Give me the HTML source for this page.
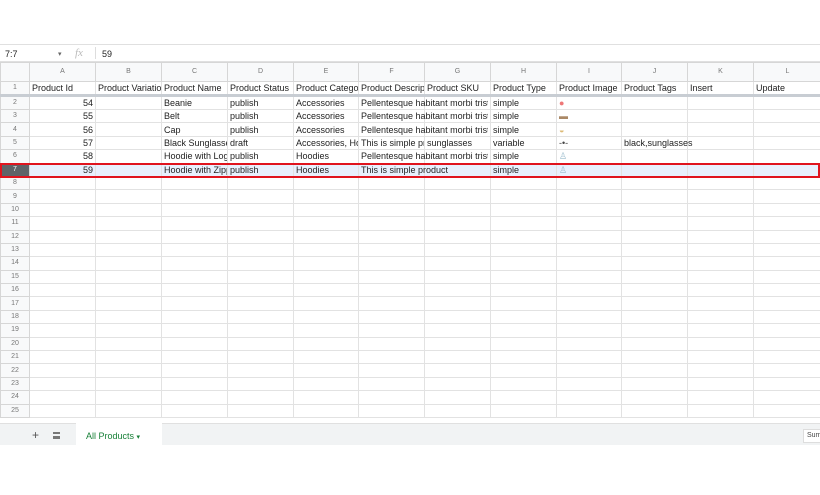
<!DOCTYPE html>
<html><head><style>
*{margin:0;padding:0;box-sizing:border-box}
body{width:820px;height:495px;background:#fff;font-family:"Liberation Sans",Arial,sans-serif;position:relative;overflow:hidden;font-size:9px;color:#222}
.a{position:absolute}
table{position:absolute;left:0;top:62px;width:821px;border-collapse:collapse;table-layout:fixed}
td{border:1px solid #e2e2e2;height:13.4px;white-space:nowrap;overflow:hidden;padding:0 2px;font-size:9px;line-height:12px}
td.rh{background:#f8f9fa;color:#777;text-align:center;font-size:7px;border-color:#d6d6d6}
tr.ch td{background:#f8f9fa;color:#777;text-align:center;font-size:7px;height:19px;border-color:#d6d6d6}
tr.r1 td{height:14px;border-bottom:3px solid #c8cdd3}
.n{text-align:right}
tr.sel td{background:#e8f0fd}
tr.sel td.rh{background:#5f6368;color:#fff}
td.ov{overflow:visible}
.sp{display:inline-block;width:127px;overflow:hidden;vertical-align:top;position:relative;z-index:1}
</style></head><body>
<div class="a" style="left:0;top:44px;width:820px;height:18px;border-top:1px solid #e0e0e0;border-bottom:1px solid #e0e0e0"></div>
<div class="a" style="left:5px;top:49px;font-size:9px">7:7</div>
<div class="a" style="left:58px;top:50px;font-size:7px;color:#666">▾</div>
<div class="a" style="left:75px;top:47px;font-size:11px;color:#bbb;font-style:italic;font-family:'Liberation Serif',serif">fx</div>
<div class="a" style="left:95px;top:47px;width:1px;height:12px;background:#ddd"></div>
<div class="a" style="left:102px;top:49px;font-size:9px">59</div>
<table>
<colgroup><col style="width:29px"><col style="width:66px"><col style="width:66px"><col style="width:66px"><col style="width:66px"><col style="width:65px"><col style="width:66px"><col style="width:66px"><col style="width:66px"><col style="width:65px"><col style="width:66px"><col style="width:66px"><col style="width:68px"></colgroup>
<tr class="ch"><td></td><td>A</td><td>B</td><td>C</td><td>D</td><td>E</td><td>F</td><td>G</td><td>H</td><td>I</td><td>J</td><td>K</td><td>L</td></tr>
<tr class="r1"><td class="rh">1</td><td>Product Id</td><td>Product Variation</td><td>Product Name</td><td>Product Status</td><td>Product Category</td><td>Product Description</td><td>Product SKU</td><td>Product Type</td><td>Product Image</td><td>Product Tags</td><td>Insert</td><td>Update</td></tr>
<tr><td class="rh">2</td><td class="n">54</td><td></td><td>Beanie</td><td>publish</td><td>Accessories</td><td class="ov"><span class="sp">Pellentesque habitant morbi tristique</span></td><td></td><td>simple</td><td><span style="color:#e77">●</span></td><td></td><td></td><td></td></tr>
<tr><td class="rh">3</td><td class="n">55</td><td></td><td>Belt</td><td>publish</td><td>Accessories</td><td class="ov"><span class="sp">Pellentesque habitant morbi tristique</span></td><td></td><td>simple</td><td><span style="color:#a86">▬</span></td><td></td><td></td><td></td></tr>
<tr><td class="rh">4</td><td class="n">56</td><td></td><td>Cap</td><td>publish</td><td>Accessories</td><td class="ov"><span class="sp">Pellentesque habitant morbi tristique</span></td><td></td><td>simple</td><td><span style="color:#db7">◒</span></td><td></td><td></td><td></td></tr>
<tr><td class="rh">5</td><td class="n">57</td><td></td><td>Black Sunglasses</td><td>draft</td><td>Accessories, Hoodies</td><td>This is simple product</td><td>sunglasses</td><td>variable</td><td><span style="color:#444">-•-</span></td><td class="ov">black,sunglasses</td><td></td><td></td></tr>
<tr><td class="rh">6</td><td class="n">58</td><td></td><td>Hoodie with Logo</td><td>publish</td><td>Hoodies</td><td class="ov"><span class="sp">Pellentesque habitant morbi tristique</span></td><td></td><td>simple</td><td><span style="color:#9bc">♙</span></td><td></td><td></td><td></td></tr>
<tr class="sel"><td class="rh">7</td><td class="n">59</td><td></td><td>Hoodie with Zipper</td><td>publish</td><td>Hoodies</td><td class="ov">This is simple product</td><td></td><td>simple</td><td><span style="color:#9bc">♙</span></td><td></td><td></td><td></td></tr>
<tr><td class="rh">8</td><td></td><td></td><td></td><td></td><td></td><td></td><td></td><td></td><td></td><td></td><td></td><td></td></tr>
<tr><td class="rh">9</td><td></td><td></td><td></td><td></td><td></td><td></td><td></td><td></td><td></td><td></td><td></td><td></td></tr>
<tr><td class="rh">10</td><td></td><td></td><td></td><td></td><td></td><td></td><td></td><td></td><td></td><td></td><td></td><td></td></tr>
<tr><td class="rh">11</td><td></td><td></td><td></td><td></td><td></td><td></td><td></td><td></td><td></td><td></td><td></td><td></td></tr>
<tr><td class="rh">12</td><td></td><td></td><td></td><td></td><td></td><td></td><td></td><td></td><td></td><td></td><td></td><td></td></tr>
<tr><td class="rh">13</td><td></td><td></td><td></td><td></td><td></td><td></td><td></td><td></td><td></td><td></td><td></td><td></td></tr>
<tr><td class="rh">14</td><td></td><td></td><td></td><td></td><td></td><td></td><td></td><td></td><td></td><td></td><td></td><td></td></tr>
<tr><td class="rh">15</td><td></td><td></td><td></td><td></td><td></td><td></td><td></td><td></td><td></td><td></td><td></td><td></td></tr>
<tr><td class="rh">16</td><td></td><td></td><td></td><td></td><td></td><td></td><td></td><td></td><td></td><td></td><td></td><td></td></tr>
<tr><td class="rh">17</td><td></td><td></td><td></td><td></td><td></td><td></td><td></td><td></td><td></td><td></td><td></td><td></td></tr>
<tr><td class="rh">18</td><td></td><td></td><td></td><td></td><td></td><td></td><td></td><td></td><td></td><td></td><td></td><td></td></tr>
<tr><td class="rh">19</td><td></td><td></td><td></td><td></td><td></td><td></td><td></td><td></td><td></td><td></td><td></td><td></td></tr>
<tr><td class="rh">20</td><td></td><td></td><td></td><td></td><td></td><td></td><td></td><td></td><td></td><td></td><td></td><td></td></tr>
<tr><td class="rh">21</td><td></td><td></td><td></td><td></td><td></td><td></td><td></td><td></td><td></td><td></td><td></td><td></td></tr>
<tr><td class="rh">22</td><td></td><td></td><td></td><td></td><td></td><td></td><td></td><td></td><td></td><td></td><td></td><td></td></tr>
<tr><td class="rh">23</td><td></td><td></td><td></td><td></td><td></td><td></td><td></td><td></td><td></td><td></td><td></td><td></td></tr>
<tr><td class="rh">24</td><td></td><td></td><td></td><td></td><td></td><td></td><td></td><td></td><td></td><td></td><td></td><td></td></tr>
<tr><td class="rh">25</td><td></td><td></td><td></td><td></td><td></td><td></td><td></td><td></td><td></td><td></td><td></td><td></td></tr>
</table>
<div class="a" style="left:0;top:163px;width:820px;height:15px;border:2px solid #e0141e;z-index:2"></div>
<div class="a" style="left:0;top:423px;width:820px;height:22px;background:#f1f3f4;border-top:1px solid #e0e0e0"></div>
<div class="a" style="left:32px;top:428px;font-size:12px;color:#555">+</div>
<div class="a" style="left:53px;top:432px;width:7px;height:7px;border-top:2px solid #777;border-bottom:2px solid #777;background:linear-gradient(#777,#777) 0 2px/7px 1px no-repeat"></div>
<div class="a" style="left:76px;top:423px;width:86px;height:22px;background:#fff"></div>
<div class="a" style="left:86px;top:431px;font-size:9px;color:#188038">All Products <span style="font-size:7px">▾</span></div>
<div class="a" style="left:803px;top:429px;width:20px;height:14px;background:#fff;border:1px solid #ddd;font-size:7px;padding:2px 3px;color:#444">Sum</div>
</body></html>
